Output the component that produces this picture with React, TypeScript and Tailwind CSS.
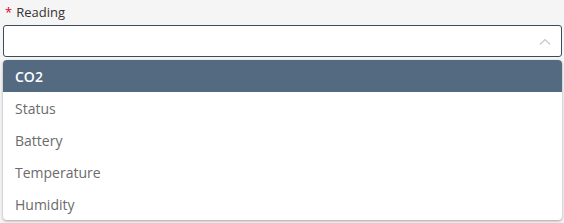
import React from "react";

const items = ["CO2", "Status", "Battery", "Temperature", "Humidity"];

export default function App() {
  return (
    <div
      className="w-[564px] h-[223px] bg-[#f5f5f5] overflow-hidden"
      style={{ fontFamily: '"Open Sans", sans-serif' }}
    >
      <div className="pl-[3px] pr-[2px] pt-[3px]">
        <div className="pl-[2px] text-[13px] leading-[18px] text-[#333] h-[22px] flex items-start">
          <span className="text-[#e4002b] mr-[4px]">*</span>
          <span>Reading</span>
        </div>
        <div className="h-[32px] bg-white border border-[#3b4b5c] rounded-[3px] flex items-center justify-end pr-[10px]">
          <svg width="12" height="7" viewBox="0 0 12 7" fill="none">
            <path d="M1 6.5 L6 1.5 L11 6.5" stroke="#c8c8c8" strokeWidth="1.2" />
          </svg>
        </div>
        <div className="mt-[3px] bg-white rounded-[4px] shadow-[0_1px_3px_rgba(0,0,0,0.35)] overflow-hidden">
          {items.map((it, i) => (
            <div
              key={it}
              className={
                i === 0
                  ? "h-[32px] flex items-center pl-[12px] bg-[#546a80] text-white font-semibold text-[14px]"
                  : "h-[32px] flex items-center pl-[12px] text-[#6b6b6b] text-[14px]"
              }
            >
              {it}
            </div>
          ))}
        </div>
      </div>
    </div>
  );
}
